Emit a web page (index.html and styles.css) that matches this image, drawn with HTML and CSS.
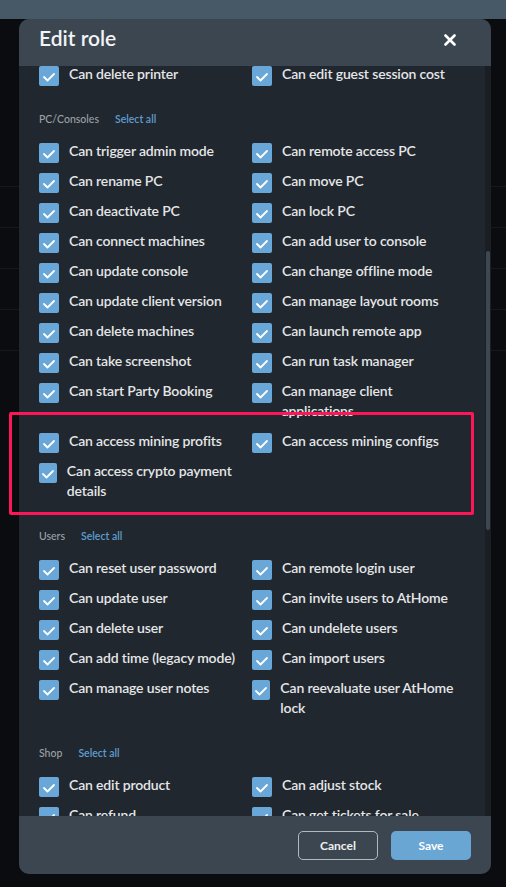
FILE: index.html
```html
<!DOCTYPE html>
<html lang="en">
<head>
<meta charset="utf-8">
<title>Edit role</title>
<link rel="stylesheet" href="styles.css">
</head>
<body>
<div class="backdrop">
  <div class="topbar"></div>
  <div class="table">
    <div class="trow"></div>
    <div class="trow"></div>
    <div class="trow"></div>
    <div class="trow"></div>
    <div class="trow"></div>
  </div>
</div>

<div class="modal">
  <header class="modal-head">
    <h1 class="modal-title">Edit role</h1>
    <button class="close" aria-label="Close">
      <svg viewBox="0 0 12 12" width="12" height="12"><path d="M1.5 1.5 L10.5 10.5 M10.5 1.5 L1.5 10.5"/></svg>
    </button>
  </header>

  <div class="modal-body">
    <div class="scroll">
      <div class="grid">
        <label class="perm"><span class="cb"><svg viewBox="0 0 20 20"><path d="M5 11 L8.5 14.5 L15 8"/></svg></span><span class="txt">Can delete printer</span></label>
        <label class="perm"><span class="cb"><svg viewBox="0 0 20 20"><path d="M5 11 L8.5 14.5 L15 8"/></svg></span><span class="txt">Can edit guest session cost</span></label>
      </div>

      <div class="section-head"><span class="sec-title">PC/Consoles</span><span class="select-all">Select all</span></div>
      <div class="grid">
        <label class="perm"><span class="cb"><svg viewBox="0 0 20 20"><path d="M5 11 L8.5 14.5 L15 8"/></svg></span><span class="txt">Can trigger admin mode</span></label>
        <label class="perm"><span class="cb"><svg viewBox="0 0 20 20"><path d="M5 11 L8.5 14.5 L15 8"/></svg></span><span class="txt">Can remote access PC</span></label>
        <label class="perm"><span class="cb"><svg viewBox="0 0 20 20"><path d="M5 11 L8.5 14.5 L15 8"/></svg></span><span class="txt">Can rename PC</span></label>
        <label class="perm"><span class="cb"><svg viewBox="0 0 20 20"><path d="M5 11 L8.5 14.5 L15 8"/></svg></span><span class="txt">Can move PC</span></label>
        <label class="perm"><span class="cb"><svg viewBox="0 0 20 20"><path d="M5 11 L8.5 14.5 L15 8"/></svg></span><span class="txt">Can deactivate PC</span></label>
        <label class="perm"><span class="cb"><svg viewBox="0 0 20 20"><path d="M5 11 L8.5 14.5 L15 8"/></svg></span><span class="txt">Can lock PC</span></label>
        <label class="perm"><span class="cb"><svg viewBox="0 0 20 20"><path d="M5 11 L8.5 14.5 L15 8"/></svg></span><span class="txt">Can connect machines</span></label>
        <label class="perm"><span class="cb"><svg viewBox="0 0 20 20"><path d="M5 11 L8.5 14.5 L15 8"/></svg></span><span class="txt">Can add user to console</span></label>
        <label class="perm"><span class="cb"><svg viewBox="0 0 20 20"><path d="M5 11 L8.5 14.5 L15 8"/></svg></span><span class="txt">Can update console</span></label>
        <label class="perm"><span class="cb"><svg viewBox="0 0 20 20"><path d="M5 11 L8.5 14.5 L15 8"/></svg></span><span class="txt">Can change offline mode</span></label>
        <label class="perm"><span class="cb"><svg viewBox="0 0 20 20"><path d="M5 11 L8.5 14.5 L15 8"/></svg></span><span class="txt">Can update client version</span></label>
        <label class="perm"><span class="cb"><svg viewBox="0 0 20 20"><path d="M5 11 L8.5 14.5 L15 8"/></svg></span><span class="txt">Can manage layout rooms</span></label>
        <label class="perm"><span class="cb"><svg viewBox="0 0 20 20"><path d="M5 11 L8.5 14.5 L15 8"/></svg></span><span class="txt">Can delete machines</span></label>
        <label class="perm"><span class="cb"><svg viewBox="0 0 20 20"><path d="M5 11 L8.5 14.5 L15 8"/></svg></span><span class="txt">Can launch remote app</span></label>
        <label class="perm"><span class="cb"><svg viewBox="0 0 20 20"><path d="M5 11 L8.5 14.5 L15 8"/></svg></span><span class="txt">Can take screenshot</span></label>
        <label class="perm"><span class="cb"><svg viewBox="0 0 20 20"><path d="M5 11 L8.5 14.5 L15 8"/></svg></span><span class="txt">Can run task manager</span></label>
        <label class="perm"><span class="cb"><svg viewBox="0 0 20 20"><path d="M5 11 L8.5 14.5 L15 8"/></svg></span><span class="txt">Can start Party Booking</span></label>
        <label class="perm"><span class="cb"><svg viewBox="0 0 20 20"><path d="M5 11 L8.5 14.5 L15 8"/></svg></span><span class="txt">Can manage client applications</span></label>
        <label class="perm"><span class="cb"><svg viewBox="0 0 20 20"><path d="M5 11 L8.5 14.5 L15 8"/></svg></span><span class="txt">Can access mining profits</span></label>
        <label class="perm"><span class="cb"><svg viewBox="0 0 20 20"><path d="M5 11 L8.5 14.5 L15 8"/></svg></span><span class="txt">Can access mining configs</span></label>
        <label class="perm"><span class="cb"><svg viewBox="0 0 20 20"><path d="M5 11 L8.5 14.5 L15 8"/></svg></span><span class="txt">Can access crypto payment details</span></label>
      </div>

      <div class="section-head"><span class="sec-title">Users</span><span class="select-all">Select all</span></div>
      <div class="grid">
        <label class="perm"><span class="cb"><svg viewBox="0 0 20 20"><path d="M5 11 L8.5 14.5 L15 8"/></svg></span><span class="txt">Can reset user password</span></label>
        <label class="perm"><span class="cb"><svg viewBox="0 0 20 20"><path d="M5 11 L8.5 14.5 L15 8"/></svg></span><span class="txt">Can remote login user</span></label>
        <label class="perm"><span class="cb"><svg viewBox="0 0 20 20"><path d="M5 11 L8.5 14.5 L15 8"/></svg></span><span class="txt">Can update user</span></label>
        <label class="perm"><span class="cb"><svg viewBox="0 0 20 20"><path d="M5 11 L8.5 14.5 L15 8"/></svg></span><span class="txt">Can invite users to AtHome</span></label>
        <label class="perm"><span class="cb"><svg viewBox="0 0 20 20"><path d="M5 11 L8.5 14.5 L15 8"/></svg></span><span class="txt">Can delete user</span></label>
        <label class="perm"><span class="cb"><svg viewBox="0 0 20 20"><path d="M5 11 L8.5 14.5 L15 8"/></svg></span><span class="txt">Can undelete users</span></label>
        <label class="perm"><span class="cb"><svg viewBox="0 0 20 20"><path d="M5 11 L8.5 14.5 L15 8"/></svg></span><span class="txt">Can add time (legacy mode)</span></label>
        <label class="perm"><span class="cb"><svg viewBox="0 0 20 20"><path d="M5 11 L8.5 14.5 L15 8"/></svg></span><span class="txt">Can import users</span></label>
        <label class="perm"><span class="cb"><svg viewBox="0 0 20 20"><path d="M5 11 L8.5 14.5 L15 8"/></svg></span><span class="txt">Can manage user notes</span></label>
        <label class="perm"><span class="cb"><svg viewBox="0 0 20 20"><path d="M5 11 L8.5 14.5 L15 8"/></svg></span><span class="txt">Can reevaluate user AtHome lock</span></label>
      </div>

      <div class="section-head"><span class="sec-title">Shop</span><span class="select-all">Select all</span></div>
      <div class="grid">
        <label class="perm"><span class="cb"><svg viewBox="0 0 20 20"><path d="M5 11 L8.5 14.5 L15 8"/></svg></span><span class="txt">Can edit product</span></label>
        <label class="perm"><span class="cb"><svg viewBox="0 0 20 20"><path d="M5 11 L8.5 14.5 L15 8"/></svg></span><span class="txt">Can adjust stock</span></label>
        <label class="perm"><span class="cb"><svg viewBox="0 0 20 20"><path d="M5 11 L8.5 14.5 L15 8"/></svg></span><span class="txt">Can refund</span></label>
        <label class="perm"><span class="cb"><svg viewBox="0 0 20 20"><path d="M5 11 L8.5 14.5 L15 8"/></svg></span><span class="txt">Can get tickets for sale</span></label>
      </div>
    </div>
    <div class="scrollbar"><div class="thumb"></div></div>
  </div>

  <footer class="modal-foot">
    <button class="btn btn-outline">Cancel</button>
    <button class="btn btn-primary">Save</button>
  </footer>
</div>

<div class="highlight"></div>
</body>
</html>
```

FILE: styles.css
```css
* { box-sizing: border-box; }

html, body {
  margin: 0;
  padding: 0;
  background: #0a0c0f;
  font-family: "Lato", "Noto Sans", sans-serif;
  overflow: hidden;
}

.backdrop {
  height: 887px;
}

.topbar {
  height: 19px;
  background: #475866;
}

.table {
  margin-top: 127px;
}

.trow {
  height: 41px;
  border-bottom: 1px solid #15181c;
}

.modal {
  position: absolute;
  top: 19px;
  left: 19px;
  width: 472px;
  height: 855px;
  border-radius: 10px;
  overflow: hidden;
  display: flex;
  flex-direction: column;
  background: #21272e;
}

.modal-head {
  height: 47px;
  flex: 0 0 47px;
  background: #3b4650;
  display: flex;
  align-items: center;
  justify-content: space-between;
  padding: 0 20px;
}

.modal-title {
  margin: 0 0 11px 0;
  font-size: 21px;
  font-weight: 600;
  color: #f1f3f5;
  line-height: 25px;
}

.close {
  background: none;
  border: 0;
  padding: 0;
  margin: 0 15px 5px 0;
  width: 12px;
  height: 12px;
  display: flex;
}

.close svg path {
  stroke: #ffffff;
  stroke-width: 2.6;
  fill: none;
  stroke-linecap: round;
}

.modal-body {
  flex: 1 1 auto;
  display: flex;
  min-height: 0;
}

.scroll {
  flex: 1 1 auto;
  overflow: hidden;
  padding: 0 20px;
}

.scrollbar {
  flex: 0 0 6px;
  background: #1b1f24;
  padding: 185px 1px 0 1px;
}

.thumb {
  width: 4px;
  height: 279px;
  border-radius: 2px;
  background: #3d4852;
}

.grid {
  display: grid;
  grid-template-columns: 213px 213px;
  row-gap: 10px;
}

.perm {
  display: flex;
  align-items: flex-start;
  gap: 10px;
  min-width: 0;
}

.cb {
  flex: 0 1 20px;
  min-width: 0;
  height: 20px;
  border-radius: 2px;
  background: #68a7d7;
  display: flex;
  align-items: center;
  justify-content: center;
  overflow: hidden;
}

.cb svg {
  flex: 0 0 20px;
  width: 20px;
  height: 20px;
}

.cb svg path {
  stroke: #ffffff;
  stroke-width: 1.8;
  fill: none;
  stroke-linecap: round;
  stroke-linejoin: round;
}

.txt {
  flex: 0 1 auto;
  min-width: 0;
  margin: -2px 0 2px 0;
  font-size: 14px;
  line-height: 20px;
  font-weight: 600;
  letter-spacing: -0.15px;
  color: #e4e6e8;
}

.section-head {
  display: flex;
  align-items: center;
  gap: 16px;
  height: 14px;
  margin: 26px 0 17px;
  font-size: 10.5px;
  line-height: 14px;
}

.sec-title {
  color: #9ca1a6;
  font-weight: 500;
}

.select-all {
  color: #5e9dd1;
  font-weight: 600;
}

.modal-foot {
  flex: 0 0 58px;
  height: 58px;
  background: #3b4650;
  display: flex;
  align-items: center;
  justify-content: flex-end;
  gap: 13px;
  padding: 0 20px;
}

.btn {
  width: 80px;
  height: 29px;
  border-radius: 5px;
  font-family: "Lato", "Noto Sans", sans-serif;
  font-size: 12px;
  font-weight: 700;
  color: #eef0f2;
  padding: 0;
}

.btn-outline {
  background: transparent;
  border: 1px solid #b3b8bd;
}

.btn-primary {
  background: #6aa6d4;
  border: 0;
  color: #ffffff;
}

.highlight {
  position: absolute;
  left: 9px;
  top: 412px;
  width: 465px;
  height: 103px;
  border: 3px solid #ff1659;
  border-radius: 2px;
  pointer-events: none;
}
```
